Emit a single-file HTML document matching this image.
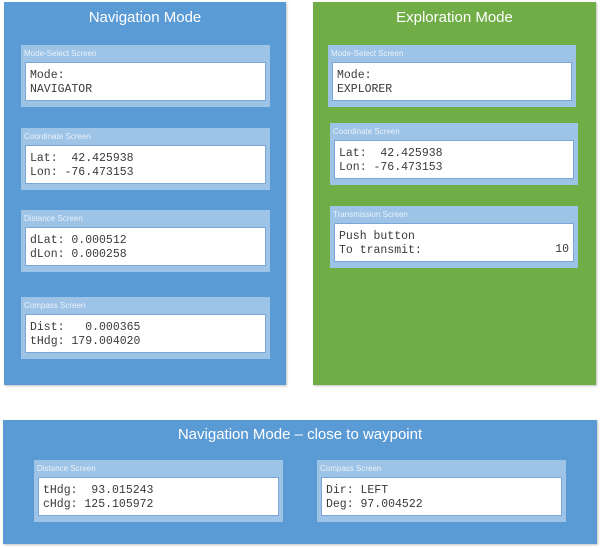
<!DOCTYPE html>
<html><head><style>
*{margin:0;padding:0;box-sizing:border-box}
body{width:600px;height:548px;background:#fff;position:relative;overflow:hidden;font-family:"Liberation Sans",sans-serif}
.p{position:absolute;box-shadow:1px 1px 2px rgba(0,0,0,.25)}
.blue{background:#5b9bd5}
.green{background:#70ad47}
.t{position:absolute;left:0;right:0;text-align:center;color:#fff;font-size:15px}
.c{position:absolute;background:#9dc3e6;height:62px}
.c .l{position:absolute;left:3px;top:4px;font-size:8px;color:#eaf2fb}
.c .i{position:absolute;left:4px;right:4px;top:17px;height:39px;background:#fff;border:1px solid #7aa7d8;font-family:"Liberation Mono",monospace;font-size:11.5px;line-height:14px;color:#3a3a3a;padding:6px 0 0 4px;white-space:pre}
</style></head><body>
<div class="p blue" style="left:4px;top:2px;width:282px;height:383px">
<div class="t" style="top:7px">Navigation Mode</div></div>
<div class="c" style="left:21px;top:45px;width:249px"><div class="l">Mode-Select Screen</div><div class="i">Mode:
NAVIGATOR</div></div>
<div class="c" style="left:21px;top:128px;width:249px"><div class="l">Coordinate Screen</div><div class="i">Lat:  42.425938
Lon: -76.473153</div></div>
<div class="c" style="left:21px;top:210px;width:249px"><div class="l">Distance Screen</div><div class="i">dLat: 0.000512
dLon: 0.000258</div></div>
<div class="c" style="left:21px;top:297px;width:249px"><div class="l">Compass Screen</div><div class="i">Dist:   0.000365
tHdg: 179.004020</div></div>

<div class="p green" style="left:313px;top:2px;width:283px;height:383px">
<div class="t" style="top:7px">Exploration Mode</div></div>
<div class="c" style="left:328px;top:45px;width:248px"><div class="l">Mode-Select Screen</div><div class="i">Mode:
EXPLORER</div></div>
<div class="c" style="left:330px;top:123px;width:248px"><div class="l">Coordinate Screen</div><div class="i">Lat:  42.425938
Lon: -76.473153</div></div>
<div class="c" style="left:330px;top:206px;width:248px"><div class="l">Transmission Screen</div><div class="i">Push button
To transmit:<span style="position:absolute;right:4px;bottom:4px">10</span></div></div>

<div class="p blue" style="left:3px;top:420px;width:594px;height:124px">
<div class="t" style="top:6px">Navigation Mode – close to waypoint</div></div>
<div class="c" style="left:34px;top:460px;width:249px"><div class="l">Distance Screen</div><div class="i">tHdg:  93.015243
cHdg: 125.105972</div></div>
<div class="c" style="left:317px;top:460px;width:249px"><div class="l">Compass Screen</div><div class="i">Dir: LEFT
Deg: 97.004522</div></div>
</body></html>
